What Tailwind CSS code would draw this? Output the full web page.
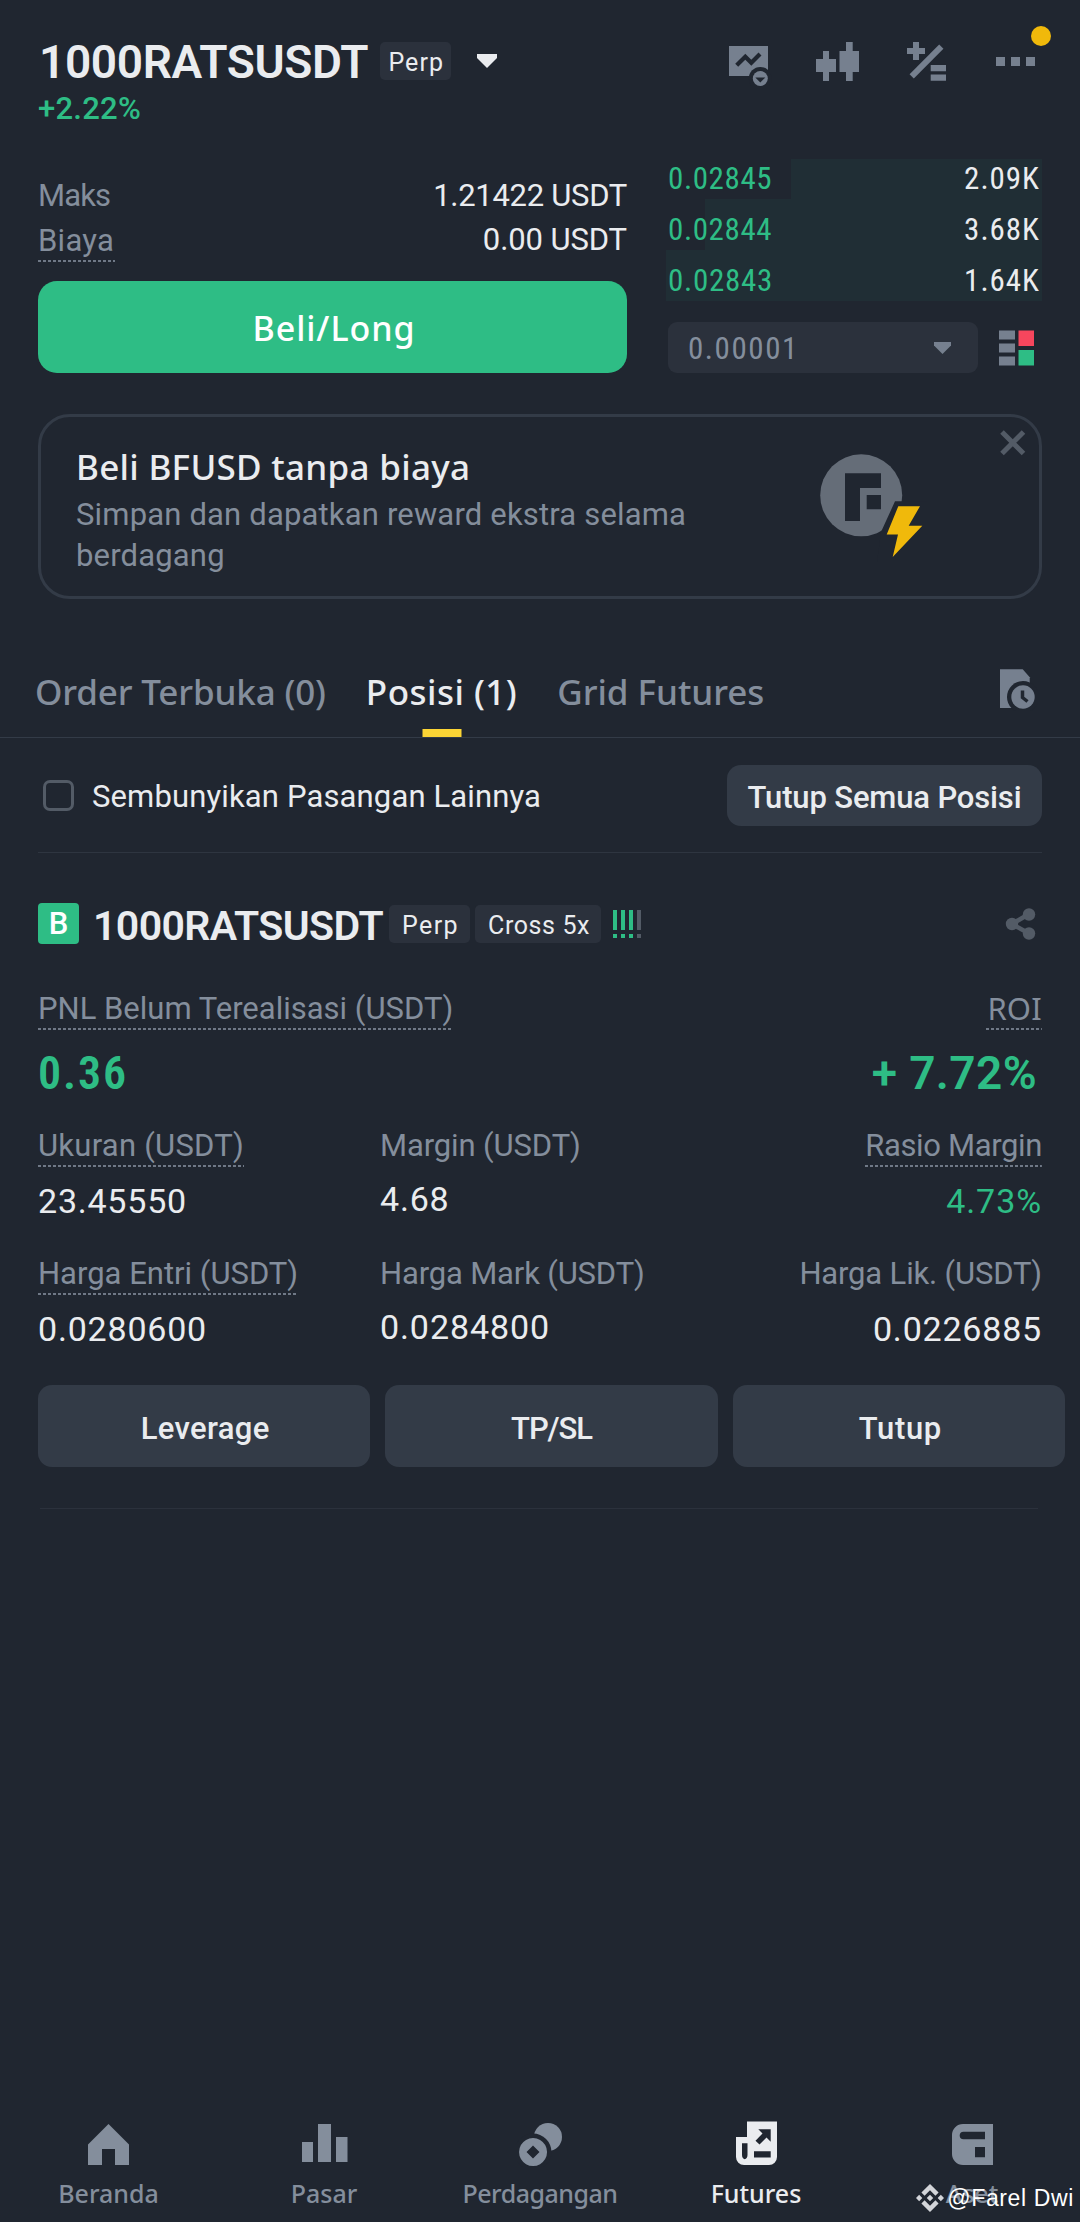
<!DOCTYPE html>
<html lang="id">
<head>
<meta charset="utf-8">
<title>Futures</title>
<script src="https://cdn.jsdelivr.net/npm/@tailwindcss/browser@4"></script>
</head>
<body class="bg-[#202630]">
<div class="relative flex h-[2222px] w-[1080px] flex-col overflow-hidden bg-[#202630] font-[Roboto,sans-serif] text-[31px] whitespace-nowrap text-[#eaecef]">

  <!-- Pair header -->
  <header class="flex h-[159px] items-start pt-[38px] pr-[41px] pl-[38px]">
    <div>
      <div class="flex h-[46px] items-center">
        <h1 class="pt-[2px] pl-px text-[46px] leading-[46px] font-semibold tracking-[-0.35px]">1000RATSUSDT</h1>
        <span class="ml-[12px] flex h-[38px] w-[71px] items-center justify-center rounded-[5px] bg-[#2b313c] pt-[4px] pl-px text-[25px] tracking-[1.1px]">Perp</span>
        <svg class="ml-[26px] h-[14px] w-[20px]" viewBox="0 0 20 14" fill="#eaecef"><path d="M0 0h20v4l-10 10L0 4z"/></svg>
      </div>
      <p class="mt-[10px] h-[30px] leading-[30px] font-medium tracking-[0.26px] text-[#2ebd85]">+2.22%</p>
    </div>
    <div class="ml-auto flex gap-[41px]">
      <svg class="size-[48px]" viewBox="0 0 48 48"><path fill="#76808f" d="M5 8h39v30H5z"/><path d="M12.7 27.3l8.6-8.6 6 6L36 16" fill="none" stroke="#202630" stroke-width="4.2"/><circle cx="36.3" cy="40.5" r="11.5" fill="#202630"/><circle cx="36.3" cy="40.5" r="7.5" fill="#76808f"/><path fill="#202630" d="M31.3 39.5h10l-5 5z"/></svg>
      <svg class="size-[48px]" viewBox="0 0 48 48" fill="#76808f"><path d="M3 21h7v-8h6v8h7v13h-7v9h-6v-9H3zM26.500 13H33V4h6.700v9H46v21h-6.300v9H33v-9h-6.500z"/></svg>
      <svg class="size-[48px]" viewBox="0 0 48 48" fill="#76808f"><path d="M11 4h6v6h6v6h-6v6h-6v-6H5v-6h6zM28.700 27H44v6.200H28.700zM28.700 36.400H44v6.400H28.700z"/><path d="M9.700 38.300L39.300 8.700" stroke="#76808f" stroke-width="6"/></svg>
      <svg class="size-[48px]" viewBox="0 0 48 48" fill="#76808f"><path d="M5 19h9v9H5zM20 19h9v9h-9zM35 19h9v9h-9z"/></svg>
    </div>
    <i class="absolute top-[26px] left-[1031px] size-[20px] rounded-full bg-[#f0b90b]"></i>
  </header>

  <!-- Order form and order book -->
  <section class="flex gap-[39px] px-[38px]">
    <div class="w-[589px] pt-[15px]">
      <div class="flex h-[44px] items-center justify-between"><span class="tracking-[-0.88px] text-[#848e9c]">Maks</span><span class="tracking-[-0.3px]">1.21422 USDT</span></div>
      <div class="flex h-[44px] items-center justify-between"><span class="h-[43px] bg-[repeating-linear-gradient(90deg,#6f7886_0_3px,transparent_3px_5px)] bg-[length:100%_2px] bg-bottom bg-no-repeat pr-px leading-[43px] tracking-[0.27px] text-[#848e9c]">Biaya</span><span class="tracking-[-0.1px]">0.00 USDT</span></div>
      <button class="mt-[19px] flex h-[92px] w-full items-center justify-center rounded-[19px] bg-[#2ebd85] pt-[2px] pl-[3px] font-[Noto_Sans,sans-serif] text-[34px] font-medium tracking-[0.94px] text-white">Beli/Long</button>
    </div>
    <div class="w-[376px]">
      <div class="flex h-[40px] items-center justify-between bg-[linear-gradient(to_right,transparent_125px,#202e35_125px)] px-[2px] font-stretch-semi-condensed"><span class="tracking-[0.6px] text-[#2ebd85]">0.02845</span><span class="tracking-[0.98px]">2.09K</span></div>
      <div class="flex h-[51px] items-center justify-between bg-[linear-gradient(to_right,transparent_39px,#202e35_39px)] px-[2px] pt-[11px] font-stretch-semi-condensed"><span class="tracking-[0.6px] text-[#2ebd85]">0.02844</span><span class="tracking-[0.98px]">3.68K</span></div>
      <div class="flex h-[51px] items-center justify-between bg-[#202e35] px-[2px] pt-[11px] font-stretch-semi-condensed"><span class="tracking-[0.7px] text-[#2ebd85]">0.02843</span><span class="tracking-[0.98px]">1.64K</span></div>
      <div class="mt-[21px] ml-[2px] flex items-center">
        <div class="flex h-[51px] w-[310px] items-center justify-between rounded-[9px] bg-[#2b313c] pr-[27px] pl-[20px] text-[#848e9c]"><span class="pt-[4px] tracking-[1.55px] font-stretch-semi-condensed">0.00001</span><svg class="h-[12px] w-[17px]" viewBox="0 0 17 12" fill="#76808f"><path d="M0 0h17v3.500L8.500 12 0 3.500z"/></svg></div>
        <svg class="ml-[21px] h-[36px] w-[35px]" viewBox="0 0 35 36"><path fill="#76808f" d="M0 .500h16v9H0zM0 13.500h16v9H0zM0 26.500h16v9H0z"/><path fill="#f6465d" d="M19.500.500H35v15.500H19.500z"/><path fill="#2ebd85" d="M19.500 20H35v15.500H19.500z"/></svg>
      </div>
    </div>
  </section>

  <!-- Promo card -->
  <section class="mt-[41px] ml-[38px] flex h-[185px] w-[1004px] shrink-0 items-start rounded-[32px] border-3 border-[#333b47] pl-[35px]">
    <div class="w-[739px] pt-[28px]">
      <h2 class="h-[44px] font-[Noto_Sans,sans-serif] text-[35px] leading-[44px] font-medium tracking-[0.29px]">Beli BFUSD tanpa biaya</h2>
      <p class="mt-[5px] leading-[41px] tracking-[0.17px] text-[#848e9c]">Simpan dan dapatkan reward ekstra selama<br>berdagang</p>
    </div>
    <svg class="mt-[33px] size-[112px]" viewBox="0 0 112 112"><circle cx="46.200" cy="45.300" r="41" fill="#656d78"/><path fill="#202630" d="M30 23.300h36V38H45v33H30zM51.700 45H66v14.300H51.700zM80 51.300h32V112H62l4-30z"/><path fill="#f0b90b" d="M83.300 56.200H105L93.700 75.700h13.600L77.700 107 83 84.500H71.700z"/></svg>
    <svg class="mt-[12px] ml-[72px] size-[28px]" viewBox="0 0 28 28" stroke="#535b66" stroke-width="5"><path d="M3 3l21.500 21.500M24.500 3L3 24.500"/></svg>
  </section>

  <!-- Tabs -->
  <nav class="flex h-[139px] shrink-0 gap-[40px] border-b border-[#333b47] pt-[70px] pl-[35px] font-[Noto_Sans,sans-serif] text-[35px] leading-[45px] font-medium text-[#848e9c]">
    <a class="tracking-[-0.16px]">Order Terbuka (0)</a>
    <a class="relative tracking-[0.48px] text-[#eaecef]">Posisi (1)<i class="absolute bottom-0 left-1/2 h-[8px] w-[39px] -translate-x-1/2 bg-[#fcd535]"></i></a>
    <a class="tracking-[-0.04px]">Grid Futures</a>
    <svg class="-mt-[2px] mr-[42px] ml-auto h-[44px] w-[40px]" viewBox="0 0 40 44"><path fill="#76808f" d="M2 2.300h22.700l7 8V41H2z"/><circle cx="25" cy="30" r="16" fill="#202630"/><circle cx="25" cy="30" r="11.700" fill="#76808f"/><path d="M24.500 23.500v7l5 4" fill="none" stroke="#202630" stroke-width="3.500"/></svg>
  </nav>

  <!-- Filter row -->
  <div class="mx-[38px] flex h-[115px] shrink-0 items-center border-b border-[#2e3540]">
    <i class="ml-[5px] size-[31px] rounded-[7px] border-3 border-[#535b66]"></i>
    <span class="ml-[18px] pt-[5px] tracking-[0.14px]">Sembunyikan Pasangan Lainnya</span>
    <button class="ml-auto flex h-[61px] w-[315px] items-center justify-center rounded-[14px] bg-[#333b47] pt-[6px] font-medium tracking-[-0.15px]">Tutup Semua Posisi</button>
  </div>

  <!-- Position -->
  <section class="px-[38px] pt-[50px]">
    <div class="flex h-[41px] items-center">
      <span class="flex size-[41px] items-center justify-center rounded-[4px] bg-[#2ebd85] pt-px font-medium text-white">B</span>
      <h3 class="ml-[14px] pt-[6px] text-[41px] leading-[41px] font-semibold tracking-[-0.6px]">1000RATSUSDT</h3>
      <span class="ml-[6px] flex h-[38px] w-[81px] items-center justify-center rounded-[5px] bg-[#2b313c] pt-[4px] pl-[2px] text-[25px] tracking-[1.4px]">Perp</span>
      <span class="ml-[5px] flex h-[38px] w-[126px] items-center justify-center rounded-[5px] bg-[#2b313c] pt-[4px] pl-[2px] text-[25px] tracking-[0.6px]">Cross 5x</span>
      <svg class="ml-[12px] h-[28px] w-[29px]" viewBox="0 0 29 28"><path fill="#2ebd85" d="M0 0h4v20H0zM0 24h4v4H0zM8 0h4v20H8zM8 24h4v4H8zM16 0h4v20h-4zM16 24h4v4h-4z"/><path fill="#535b66" d="M24 0h4v20h-4zM24 24h4v4h-4z"/></svg>
      <svg class="mr-[6px] ml-auto h-[32px] w-[31px]" viewBox="0 0 31 32" fill="#535b66"><path d="M24 6L7 16l17 9.500" fill="none" stroke="#535b66" stroke-width="4.500"/><circle cx="7" cy="16" r="6.200"/><circle cx="24" cy="6.500" r="6.200"/><circle cx="24" cy="25.500" r="6.200"/></svg>
    </div>

    <div class="mt-[43px] flex justify-between leading-[43px] text-[#848e9c]">
      <span class="h-[43px] bg-[repeating-linear-gradient(90deg,#6f7886_0_3px,transparent_3px_5px)] bg-[length:100%_2px] bg-bottom bg-no-repeat">PNL Belum Terealisasi (USDT)</span>
      <span class="h-[43px] bg-[repeating-linear-gradient(90deg,#6f7886_0_3px,transparent_3px_5px)] bg-[length:100%_2px] bg-bottom bg-no-repeat pl-px font-[Noto_Sans,sans-serif] tracking-[0.2px]">ROI</span>
    </div>
    <div class="mt-[18px] flex justify-between text-[46px] leading-[50px] font-semibold text-[#2ebd85]">
      <span class="tracking-[1.88px] font-stretch-semi-condensed">0.36</span><span class="pr-[5px] tracking-[0.39px]">+ 7.72%</span>
    </div>

    <div class="mt-[26px] grid grid-cols-[342px_auto_1fr] leading-[43px]">
      <div class="text-[#848e9c]"><span class="inline-block h-[43px] bg-[repeating-linear-gradient(90deg,#6f7886_0_3px,transparent_3px_5px)] bg-[length:100%_2px] bg-bottom bg-no-repeat tracking-[0.25px]">Ukuran (USDT)</span></div>
      <div class="tracking-[-0.12px] text-[#848e9c]">Margin (USDT)</div>
      <div class="text-right text-[#848e9c]"><span class="inline-block h-[43px] bg-[repeating-linear-gradient(90deg,#6f7886_0_3px,transparent_3px_5px)] bg-[length:100%_2px] bg-bottom bg-no-repeat tracking-[-0.36px]">Rasio Margin</span></div>
      <div class="mt-[12px] text-[34px] leading-[44px] tracking-[0.77px]">23.45550</div>
      <div class="mt-[10px] text-[34px] leading-[44px] tracking-[0.8px]">4.68</div>
      <div class="mt-[12px] text-right text-[34px] leading-[44px] tracking-[0.93px] text-[#2ebd85]">4.73%</div>
    </div>
    <div class="mt-[29px] grid grid-cols-[342px_auto_1fr] leading-[43px]">
      <div class="text-[#848e9c]"><span class="inline-block h-[43px] bg-[repeating-linear-gradient(90deg,#6f7886_0_3px,transparent_3px_5px)] bg-[length:100%_2px] bg-bottom bg-no-repeat">Harga Entri (USDT)</span></div>
      <div class="tracking-[-0.16px] text-[#848e9c]">Harga Mark (USDT)</div>
      <div class="text-right tracking-[-0.16px] text-[#848e9c]">Harga Lik. (USDT)</div>
      <div class="mt-[12px] text-[34px] leading-[44px] tracking-[0.8px]">0.0280600</div>
      <div class="mt-[10px] text-[34px] leading-[44px] tracking-[0.9px]">0.0284800</div>
      <div class="mt-[12px] text-right text-[34px] leading-[44px] tracking-[0.8px]">0.0226885</div>
    </div>

    <div class="mt-[34px] grid h-[82px] w-[1027px] grid-cols-3 gap-[15px] font-medium">
      <button class="rounded-[14px] bg-[#333b47] pt-[6px] pl-[2px] tracking-[0.34px]">Leverage</button>
      <button class="rounded-[14px] bg-[#333b47] pt-[6px] tracking-[-1.1px]">TP/SL</button>
      <button class="rounded-[14px] bg-[#333b47] pt-[6px] pl-[3px] tracking-[0.64px]">Tutup</button>
    </div>
    <hr class="mt-[41px] mr-[4px] ml-[2px] border-[#2b313c]">
  </section>

  <!-- Bottom navigation -->
  <footer class="mt-auto grid h-[103px] grid-cols-5 justify-items-center font-[Noto_Sans,sans-serif] text-[25px] leading-[30px] font-medium text-[#848e9c]">
    <a class="flex flex-col items-center gap-[11px]"><svg class="size-[48px]" viewBox="0 0 48 48" fill="#848e9c"><path d="M24.500 5L45 25.500V46H31V30H18v16H4V25.500z"/></svg><span class="pl-px">Beranda</span></a>
    <a class="flex flex-col items-center gap-[11px]"><svg class="size-[48px]" viewBox="0 0 48 48" fill="#848e9c"><path d="M2 23h11v20H2zM18 5h13v38H18zM36 18h11.500v25H36z"/></svg><span>Pasar</span></a>
    <a class="flex flex-col items-center gap-[11px]"><svg class="size-[48px]" viewBox="0 0 48 48"><circle cx="32" cy="18" r="14" fill="#848e9c"/><circle cx="17" cy="33" r="18.500" fill="#202630"/><path fill="#848e9c" fill-rule="evenodd" d="M17 19a14 14 0 1 0 .1 0zM17 26.500l6.500 6.500-6.500 6.500-6.500-6.500z"/></svg><span class="tracking-[-0.48px]">Perdagangan</span></a>
    <a class="flex flex-col items-center gap-[11px] text-[#eaecef]"><svg class="size-[48px]" viewBox="0 0 48 48" fill="#eaecef"><path fill-rule="evenodd" d="M15 2.500h30V38a8 8 0 0 1-8 8H12a8 8 0 0 1-8-8V18h11zM26.300 10.300l4.200 4.300-7 7.100 4 3.800 7-7 4.200 4.200V10.300zM22 32.300v6.200h16.700v-6.200zM15.500 24.300H10V36c0 5.500 5.500 5.500 5.500 0z"/></svg><span>Futures</span></a>
    <a class="flex flex-col items-center gap-[11px]"><svg class="size-[48px]" viewBox="0 0 48 48" fill="#848e9c"><path fill-rule="evenodd" d="M15 5h30v41H15A11 11 0 0 1 4 35V16A11 11 0 0 1 15 5zM15.500 12.700a3.800 3.800 0 0 0 0 7.600H37v-7.600zM27 28v10.300h10V28z"/></svg><span>Aset</span></a>
  </footer>

  <!-- Author tag -->
  <div class="absolute right-[6px] bottom-[8px] flex items-center gap-[3px] text-[23px] leading-[32px] text-white">
    <svg class="size-[28px]" viewBox="0 0 126.610 126.610" fill="#d3d5d9"><path d="M38.730 53.200L63.310 28.630 87.900 53.220l14.300-14.300L63.310 0 24.430 38.900zM0 63.310l14.300-14.300 14.300 14.300-14.300 14.300zM38.730 73.410L63.310 98 87.900 73.400l14.310 14.290-38.900 38.920-38.900-38.900zM98 63.310l14.300-14.300 14.300 14.300-14.300 14.300zM77.830 63.300L63.310 48.780 48.780 63.310l14.530 14.510z"/></svg>
    <span class="pt-px font-[Liberation_Sans,sans-serif] tracking-[0.63px]">@Farel Dwi</span>
  </div>
</div>
</body>
</html>
